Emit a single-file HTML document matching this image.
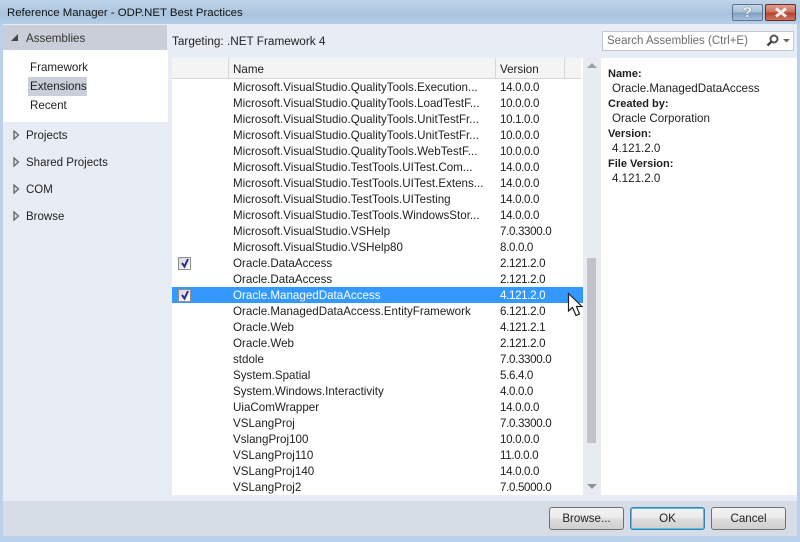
<!DOCTYPE html>
<html><head><meta charset="utf-8">
<style>
html,body{margin:0;padding:0;background:#b9d1ea}
#w{position:relative;width:800px;height:542px;overflow:hidden;background:#b9d1ea;font:12px "Liberation Sans",sans-serif;color:#1e1e1e}
#w div{position:absolute;white-space:nowrap;box-sizing:border-box}
.r{left:233px;height:16px;line-height:16px;font-size:11.6px;margin-top:1px}
.v{left:500px;height:16px;line-height:16px;font-size:11.6px;margin-top:1px;letter-spacing:-.35px}
.cb{left:178px;width:13px;height:13px;border:1px solid #8e8f8f;background:linear-gradient(135deg,#d4d4d4,#fff)}
.btn{top:507px;height:23px;border:1px solid #707070;border-radius:3px;background:linear-gradient(#f2f2f2 0,#ebebeb 48%,#dddddd 50%,#cfcfcf 100%);text-align:center;line-height:21px;font-size:11.6px;color:#222}
.lt{left:26px;font-size:11.5px;height:16px;line-height:16px;color:#222;margin-top:1px}
.d{left:612px;font-size:11.6px;height:15px;line-height:15px}
.b{font-weight:bold;left:608px;font-size:11px;height:15px;line-height:15px;margin-top:1px}
</style></head><body>
<div id="w">
<div style="left:0;top:0;width:800px;height:24px;background:linear-gradient(#c0d4e8,#a9c4de 60%,#b6cfe8)"></div>
<div style="left:7px;top:5px;font-size:11.4px;height:16px;line-height:16px;color:#111">Reference Manager - ODP.NET Best Practices</div>
<div style="left:732px;top:4px;width:31px;height:17px;border:1px solid #5b7590;border-radius:2px;background:linear-gradient(#c4d6e8 0,#a8c0d8 48%,#7f9fbe 52%,#a4c0da 100%);text-align:center;font:bold 15px/15px 'Liberation Sans',sans-serif;color:#eef0f2;text-shadow:0 0 1px #333">?</div>
<div style="left:765px;top:4px;width:31px;height:17px;border:1px solid #6b2b20;border-radius:2px;background:linear-gradient(#e0a090 0,#c9705c 48%,#b5402c 52%,#cc7560 100%)"></div>
<svg style="position:absolute;left:773px;top:7px" width="16" height="11"><path d="M3 1.5L13 9.5M13 1.5L3 9.5" stroke="#f3f0ee" stroke-width="3" fill="none"/></svg>

<!-- client -->
<div style="left:3px;top:24px;width:794px;height:477px;background:#e8ecf4"></div>
<div style="left:3px;top:501px;width:794px;height:35px;background:#d7dde6"></div>

<!-- left -->
<div style="left:3px;top:25px;width:164px;height:25px;background:#c9ced9"></div>
<div style="left:3px;top:50px;width:165px;height:72px;background:#fff"></div>
<svg style="position:absolute;left:10px;top:33px" width="9" height="9"><path d="M1 8H8V1Z" fill="#444"/></svg>
<div style="left:26px;top:31px;font-size:11.6px;height:16px;line-height:16px;color:#333">Assemblies</div>
<div style="left:28px;top:77px;width:59px;height:19px;background:#c9ced9"></div>
<div style="left:30px;top:60px;font-size:11.6px;height:16px;line-height:16px">Framework</div>
<div style="left:30px;top:79px;font-size:11.6px;height:16px;line-height:16px">Extensions</div>
<div style="left:30px;top:98px;font-size:11.6px;height:16px;line-height:16px">Recent</div>
<svg style="position:absolute;left:13px;top:130px" width="7" height="92" fill="#e4e6ea" stroke="#666" stroke-width="1.3"><path d="M1 1V9L5.5 5Z"/><path d="M1 28V36L5.5 32Z"/><path d="M1 55V63L5.5 59Z"/><path d="M1 82V90L5.5 86Z"/></svg>
<div class="lt" style="top:127px">Projects</div>
<div class="lt" style="top:154px">Shared Projects</div>
<div class="lt" style="top:181px">COM</div>
<div class="lt" style="top:208px">Browse</div>

<div style="left:172px;top:34px;font-size:11.77px;height:16px;line-height:16px;color:#222">Targeting: .NET Framework 4</div>

<!-- search -->
<div style="left:602px;top:31px;width:192px;height:20px;border:1px solid #c3c8d0;background:#fff"></div>
<div style="left:607px;top:33.5px;font-size:11.5px;height:15px;line-height:15px;color:#6d6d6d">Search Assemblies (Ctrl+E)</div>
<svg style="position:absolute;left:765px;top:33px" width="28" height="15"><circle cx="9" cy="6" r="3.5" fill="none" stroke="#555" stroke-width="2"/><path d="M6.5 8.5L2.5 12.5" stroke="#444" stroke-width="2.4"/><path d="M18 6H25L21.5 9.5Z" fill="#666"/></svg>

<!-- list -->
<div style="left:172px;top:58px;width:411px;height:437px;background:#fff"></div>
<div style="left:172px;top:58px;width:409px;height:21px;background:#f4f4f4;border-bottom:1px solid #d5d5d5"></div>
<div style="left:228px;top:58px;width:1px;height:21px;background:#d5d5d5"></div>
<div style="left:495px;top:58px;width:1px;height:21px;background:#d5d5d5"></div>
<div style="left:564px;top:58px;width:1px;height:21px;background:#d5d5d5"></div>
<div class="r" style="top:61px">Name</div>
<div class="v" style="top:61px;letter-spacing:0">Version</div>
<div style="left:172px;top:287px;width:411px;height:16px;background:#3399ff"></div>

<div class="r" style="top:79px">Microsoft.VisualStudio.QualityTools.Execution...</div><div class="v" style="top:79px">14.0.0.0</div>
<div class="r" style="top:95px">Microsoft.VisualStudio.QualityTools.LoadTestF...</div><div class="v" style="top:95px">10.0.0.0</div>
<div class="r" style="top:111px">Microsoft.VisualStudio.QualityTools.UnitTestFr...</div><div class="v" style="top:111px">10.1.0.0</div>
<div class="r" style="top:127px">Microsoft.VisualStudio.QualityTools.UnitTestFr...</div><div class="v" style="top:127px">10.0.0.0</div>
<div class="r" style="top:143px">Microsoft.VisualStudio.QualityTools.WebTestF...</div><div class="v" style="top:143px">10.0.0.0</div>
<div class="r" style="top:159px">Microsoft.VisualStudio.TestTools.UITest.Com...</div><div class="v" style="top:159px">14.0.0.0</div>
<div class="r" style="top:175px">Microsoft.VisualStudio.TestTools.UITest.Extens...</div><div class="v" style="top:175px">14.0.0.0</div>
<div class="r" style="top:191px">Microsoft.VisualStudio.TestTools.UITesting</div><div class="v" style="top:191px">14.0.0.0</div>
<div class="r" style="top:207px">Microsoft.VisualStudio.TestTools.WindowsStor...</div><div class="v" style="top:207px">14.0.0.0</div>
<div class="r" style="top:223px">Microsoft.VisualStudio.VSHelp</div><div class="v" style="top:223px">7.0.3300.0</div>
<div class="r" style="top:239px">Microsoft.VisualStudio.VSHelp80</div><div class="v" style="top:239px">8.0.0.0</div>
<div class="r" style="top:255px">Oracle.DataAccess</div><div class="v" style="top:255px">2.121.2.0</div>
<div class="r" style="top:271px">Oracle.DataAccess</div><div class="v" style="top:271px">2.121.2.0</div>
<div class="r" style="top:287px;color:#fff">Oracle.ManagedDataAccess</div><div class="v" style="top:287px;color:#fff">4.121.2.0</div>
<div class="r" style="top:303px">Oracle.ManagedDataAccess.EntityFramework</div><div class="v" style="top:303px">6.121.2.0</div>
<div class="r" style="top:319px">Oracle.Web</div><div class="v" style="top:319px">4.121.2.1</div>
<div class="r" style="top:335px">Oracle.Web</div><div class="v" style="top:335px">2.121.2.0</div>
<div class="r" style="top:351px">stdole</div><div class="v" style="top:351px">7.0.3300.0</div>
<div class="r" style="top:367px">System.Spatial</div><div class="v" style="top:367px">5.6.4.0</div>
<div class="r" style="top:383px">System.Windows.Interactivity</div><div class="v" style="top:383px">4.0.0.0</div>
<div class="r" style="top:399px">UiaComWrapper</div><div class="v" style="top:399px">14.0.0.0</div>
<div class="r" style="top:415px">VSLangProj</div><div class="v" style="top:415px">7.0.3300.0</div>
<div class="r" style="top:431px">VslangProj100</div><div class="v" style="top:431px">10.0.0.0</div>
<div class="r" style="top:447px">VSLangProj110</div><div class="v" style="top:447px">11.0.0.0</div>
<div class="r" style="top:463px">VSLangProj140</div><div class="v" style="top:463px">14.0.0.0</div>
<div class="r" style="top:479px">VSLangProj2</div><div class="v" style="top:479px">7.0.5000.0</div>

<div class="cb" style="top:257px"></div>
<div class="cb" style="top:289px"></div>
<svg style="position:absolute;left:180px;top:257px" width="10" height="45" fill="none" stroke="#2a2a9a" stroke-width="2"><path d="M2 6L4.5 9.5L8 2"/><path d="M2 38L4.5 41.5L8 34"/></svg>

<!-- scrollbar -->
<div style="left:583px;top:58px;width:18px;height:437px;background:#e8ebf0"></div>
<div style="left:587px;top:258px;width:9px;height:185px;background:#c2c3c9"></div>
<svg style="position:absolute;left:585px;top:62px" width="14" height="8"><path d="M2 6H12L7 1Z" fill="#9aa0a8"/></svg>
<svg style="position:absolute;left:585px;top:483px" width="14" height="8"><path d="M2 1H12L7 6Z" fill="#8e949e"/></svg>

<!-- cursor -->
<svg style="position:absolute;left:567px;top:292px" width="18" height="26"><path d="M1.5 1.5V19L5.5 15.5L9 23.5L12.5 22L9.5 14.5H15Z" fill="#fff" stroke="#222" stroke-width="1.2"/></svg>

<!-- details -->
<div style="left:601px;top:58px;width:196px;height:437px;background:#fff"></div>
<div class="b" style="top:66px">Name:</div>
<div class="d" style="top:81px">Oracle.ManagedDataAccess</div>
<div class="b" style="top:96px">Created by:</div>
<div class="d" style="top:111px">Oracle Corporation</div>
<div class="b" style="top:126px">Version:</div>
<div class="d" style="top:141px">4.121.2.0</div>
<div class="b" style="top:156px">File Version:</div>
<div class="d" style="top:171px">4.121.2.0</div>

<!-- buttons -->
<div class="btn" style="left:549px;width:75px">Browse...</div>
<div class="btn" style="left:630px;width:75px;border-color:#3c7fb1;box-shadow:inset 0 0 0 1px #4fc3ea">OK</div>
<div class="btn" style="left:711px;width:75px">Cancel</div>
</div>
</body></html>
